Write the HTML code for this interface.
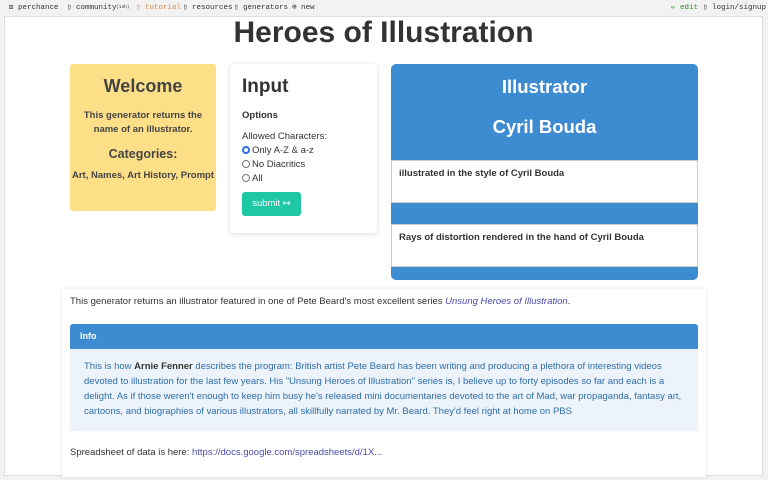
<!DOCTYPE html>
<html><head><style>
*{box-sizing:border-box}
body{margin:0;width:768px;height:480px;background:#f2f2f2;font-family:"Liberation Sans",sans-serif;overflow:hidden;position:relative;color:#333}
.top{position:absolute;top:0;left:0;right:0;height:16px;font-family:"Liberation Mono",monospace;font-size:7.5px;line-height:16px;color:#333}
.top span{position:absolute;top:0;white-space:nowrap}
.main{position:absolute;left:4px;top:16px;width:759px;height:460px;background:#fff;border:1px solid #ddd}
h1{position:absolute;top:0;left:0;width:100%;text-align:center;margin:0;font-size:30px;line-height:32px;color:#333;font-weight:bold}
.wel{position:absolute;left:65px;top:47px;width:146px;height:147px;background:#fddf88;border-radius:3px;text-align:center;color:#444}
.inp{position:absolute;left:225px;top:47px;width:147px;height:169px;background:#fff;border-radius:4px;box-shadow:0 1px 6px rgba(0,0,0,.15);padding:0 12px;font-size:9.5px}
.ill{position:absolute;left:386px;top:47px;width:307px;height:216px;background:#3d8bd0;border-radius:5px;color:#fff;text-align:center}
.ta{position:absolute;left:0;width:307px;height:43px;background:#fff;border:1px solid #ccc;color:#333;text-align:left;font-size:9.5px;font-weight:bold;padding:7px 7px}
.low{position:absolute;left:57px;top:272px;width:644px;height:188px;background:#fff;box-shadow:0 0 4px rgba(0,0,0,.1);font-size:9.5px;color:#333}
.rb{display:inline-block;width:8px;height:8px;border:1px solid #777;border-radius:50%;vertical-align:-1px;margin-right:2px}
</style></head><body>
<div class="top">
<span style="left:9px">⚄ perchance</span>
<span style="left:67px">▯ community</span>
<span style="left:116px;font-size:4.5px">(14h)</span>
<span style="left:136px;color:#d88a4a">▯ tutorial</span>
<span style="left:183px">▯ resources</span>
<span style="left:234px">▯ generators</span>
<span style="left:292px">⊕ new</span>
<span style="left:671px;color:#2a8a2a">✏ edit</span>
<span style="left:703px">▯ login/signup</span>
</div>
<div class="main">
<h1>Heroes of Illustration</h1>
<div class="wel">
<div style="font-size:18px;font-weight:bold;margin-top:12px">Welcome</div>
<div style="font-size:9.5px;font-weight:bold;margin-top:12px;line-height:14px">This generator returns the<br>name of an illustrator.</div>
<div style="font-size:12.5px;font-weight:bold;margin-top:10px">Categories:</div>
<div style="font-size:9.5px;font-weight:bold;margin-top:9px">Art, Names, Art History, Prompt</div>
</div>
<div class="inp">
<div style="font-size:19px;font-weight:bold;margin-top:12px">Input</div>
<div style="font-weight:bold;margin-top:12px">Options</div>
<div style="margin-top:9px;line-height:14px">Allowed Characters:<br>
<span class="rb" style="border:2.5px solid #2a6ee0"></span>Only A-Z &amp; a-z<br><span class="rb"></span>No Diacritics<br><span class="rb"></span>All</div>
<div style="margin-top:6px;width:59px;height:24px;background:#1ec8a5;border-radius:3px;color:#fff;line-height:24px;text-align:center">submit ↦</div>
</div>
<div class="ill">
<div style="font-size:18.5px;font-weight:bold;margin-top:12px">Illustrator</div>
<div style="font-size:18.5px;font-weight:bold;margin-top:18px">Cyril Bouda</div>
<div class="ta" style="top:96px">illustrated in the style of Cyril Bouda</div>
<div class="ta" style="top:160px">Rays of distortion rendered in the hand of Cyril Bouda</div>
</div>
<div class="low">
<div style="position:absolute;left:8px;top:7px">This generator returns an illustrator featured in one of Pete Beard's most excellent series <i style="color:#4a4aa8">Unsung Heroes of Illustration</i>.</div>
<div style="position:absolute;left:8px;top:35px;width:628px;height:25px;background:#3d8bd0;color:#fff;font-weight:bold;line-height:25px;padding-left:10px;border-radius:3px 3px 0 0;font-size:9px">Info</div>
<div style="position:absolute;left:8px;top:60px;width:628px;height:82px;background:#edf3fa;color:#2f6ea8;padding:10px 14px;line-height:15px">This is how <b style="color:#333">Arnie Fenner</b> describes the program: British artist Pete Beard has been writing and producing a plethora of interesting videos devoted to illustration for the last few years. His "Unsung Heroes of Illustration" series is, I believe up to forty episodes so far and each is a delight. As if those weren't enough to keep him busy he's released mini documentaries devoted to the art of Mad, war propaganda, fantasy art, cartoons, and biographies of various illustrators, all skillfully narrated by Mr. Beard. They'd feel right at home on PBS</div>
<div style="position:absolute;left:8px;top:158px">Spreadsheet of data is here: <span style="color:#4a4aa8">https://docs.google.com/spreadsheets/d/1X...</span></div>
</div>
</div>
</body></html>
